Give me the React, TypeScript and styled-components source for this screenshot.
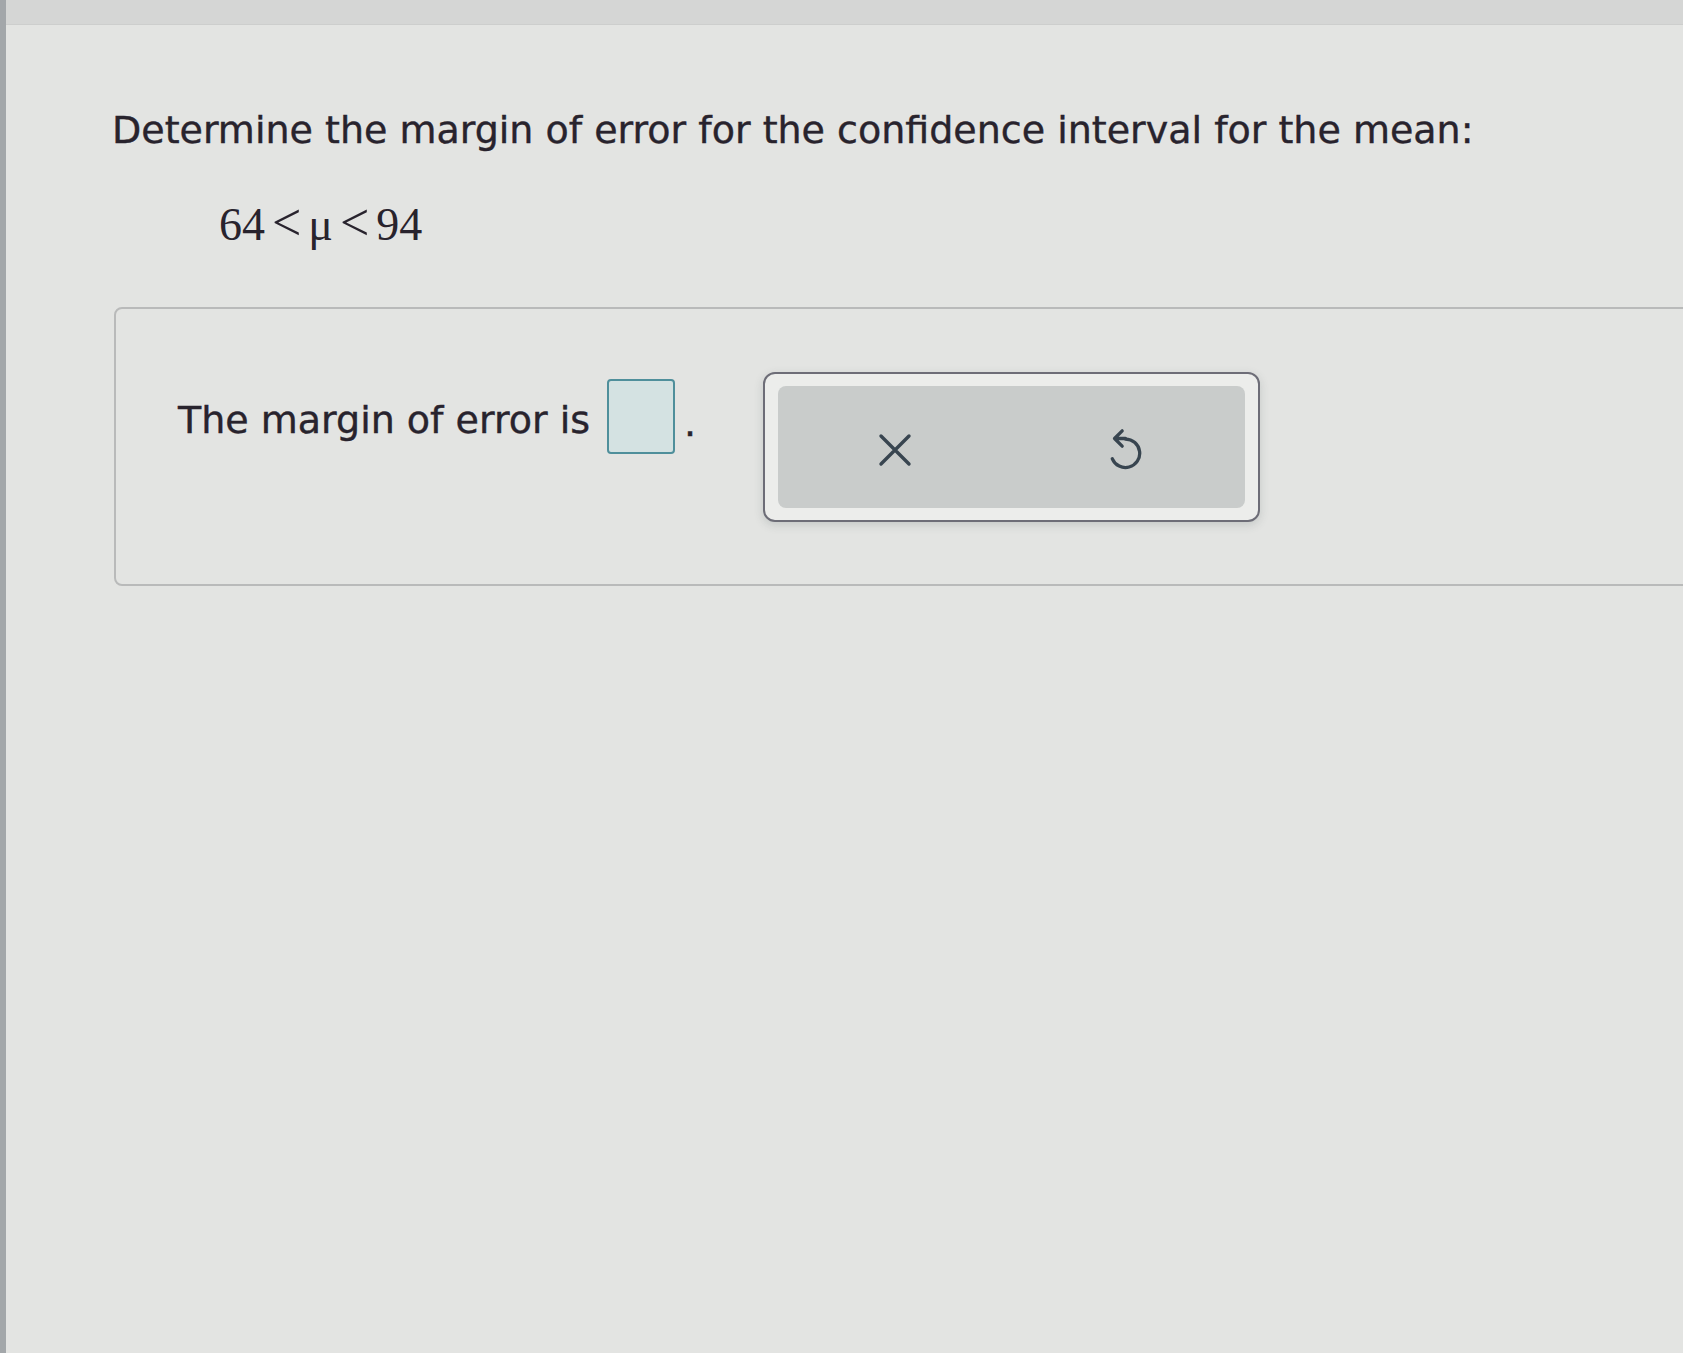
import styled, { createGlobalStyle } from "styled-components";

const GlobalStyle = createGlobalStyle`
    html, body {
        margin: 0;
        padding: 0;
        background-color: #e3e4e2;
        overflow: hidden;
    }
    body {
        font-family: "DejaVu Sans", Verdana, sans-serif;
        color: #28232d;
    }
`;

const App = () => {
    return (
        <>
            <GlobalStyle />
            <Page>
                <TopBar />
                <Content>
                    <Title>Determine the margin of error for the confidence interval for the mean:</Title>
                    <MathLine>
                        <span>64</span>
                        <Rel>&lt;</Rel>
                        <span>μ</span>
                        <Rel>&lt;</Rel>
                        <span>94</span>
                    </MathLine>
                    <Card>
                        <Row>
                            <Sentence>
                                <span>The margin of error is</span>
                                <AnswerBox aria-label="margin of error" />
                                <Period>.</Period>
                            </Sentence>
                            <ToolFrame>
                                <ToolInner>
                                    <ToolButton aria-label="Clear">
                                        <svg width="34" height="34" viewBox="0 0 34 34" fill="none">
                                            <path d="M3 3 L31 31 M31 3 L3 31" stroke="#384550" strokeWidth="3.4" strokeLinecap="round" />
                                        </svg>
                                    </ToolButton>
                                    <ToolButton aria-label="Undo" $shift={-8}>
                                        <svg width="44" height="46" viewBox="0 0 40 42" fill="none">
                                            <path d="M25 11 A13 13 0 1 1 13 29" stroke="#384550" strokeWidth="3" strokeLinecap="round" />
                                            <path d="M22 3.5 L15 10.5 L22 17.5 M15 10.5 H25" stroke="#384550" strokeWidth="3" strokeLinecap="round" strokeLinejoin="round" />
                                        </svg>
                                    </ToolButton>
                                </ToolInner>
                            </ToolFrame>
                        </Row>
                    </Card>
                </Content>
            </Page>
        </>
    );
};

export default App;

const Page = styled.div`
    min-height: 100vh;
    border-left: 6px solid #a3a7aa;
    display: flex;
    flex-direction: column;
`;

const TopBar = styled.div`
    height: 24px;
    background-color: #d5d6d5;
    border-bottom: 1px solid #cdcecd;
`;

const Content = styled.div`
    display: flex;
    flex-direction: column;
    padding-left: 106px;
`;

const Title = styled.div`
    margin-top: 82px;
    font-size: 38px;
    line-height: 46px;
    white-space: nowrap;
    -webkit-text-stroke: 0.4px #28232d;
`;

const MathLine = styled.div`
    margin-top: 42px;
    margin-left: 107px;
    font-family: "Liberation Serif", "Times New Roman", serif;
    font-size: 46px;
    line-height: 56px;
    display: flex;
    align-items: baseline;
`;

const Rel = styled.span`
    margin: 0 7px;
    font-size: 52px;
`;

const Card = styled.div`
    margin-top: 54px;
    margin-left: 2px;
    margin-right: -60px;
    border: 2px solid #b9baba;
    border-radius: 8px;
    padding: 63px 0 62px 62px;
`;

const Row = styled.div`
    display: flex;
    align-items: flex-start;
`;

const Sentence = styled.div`
    display: flex;
    align-items: center;
    margin-top: 7px;
    font-size: 38px;
    line-height: 46px;
    white-space: nowrap;
    -webkit-text-stroke: 0.4px #28232d;

    & > span:first-child {
        position: relative;
        top: 3px;
    }
`;

const AnswerBox = styled.div`
    box-sizing: border-box;
    width: 68px;
    height: 75px;
    margin-left: 17px;
    border: 2px solid #4f8f9b;
    border-radius: 4px;
    background-color: #d4e2e2;
`;

const Period = styled.span`
    margin-left: 9px;
    position: relative;
    top: 6px;
`;

const ToolFrame = styled.div`
    box-sizing: border-box;
    width: 497px;
    height: 150px;
    margin-left: 67px;
    padding: 12px 13px;
    border: 2.5px solid #6d6d77;
    border-radius: 12px;
    background-color: #ecedeb;
    box-shadow: 0 3px 10px rgba(60, 80, 80, 0.18);
`;

const ToolInner = styled.div`
    display: flex;
    height: 100%;
    background-color: #c9cccb;
    border-radius: 8px;
`;

const ToolButton = styled.button<{ $shift?: number }>`
    flex: 1;
    display: flex;
    align-items: center;
    justify-content: center;
    border: none;
    background: transparent;
    padding: 0;
    cursor: pointer;
    svg {
        transform: translate(${(p) => p.$shift ?? 0}px, 3px);
    }
`;
